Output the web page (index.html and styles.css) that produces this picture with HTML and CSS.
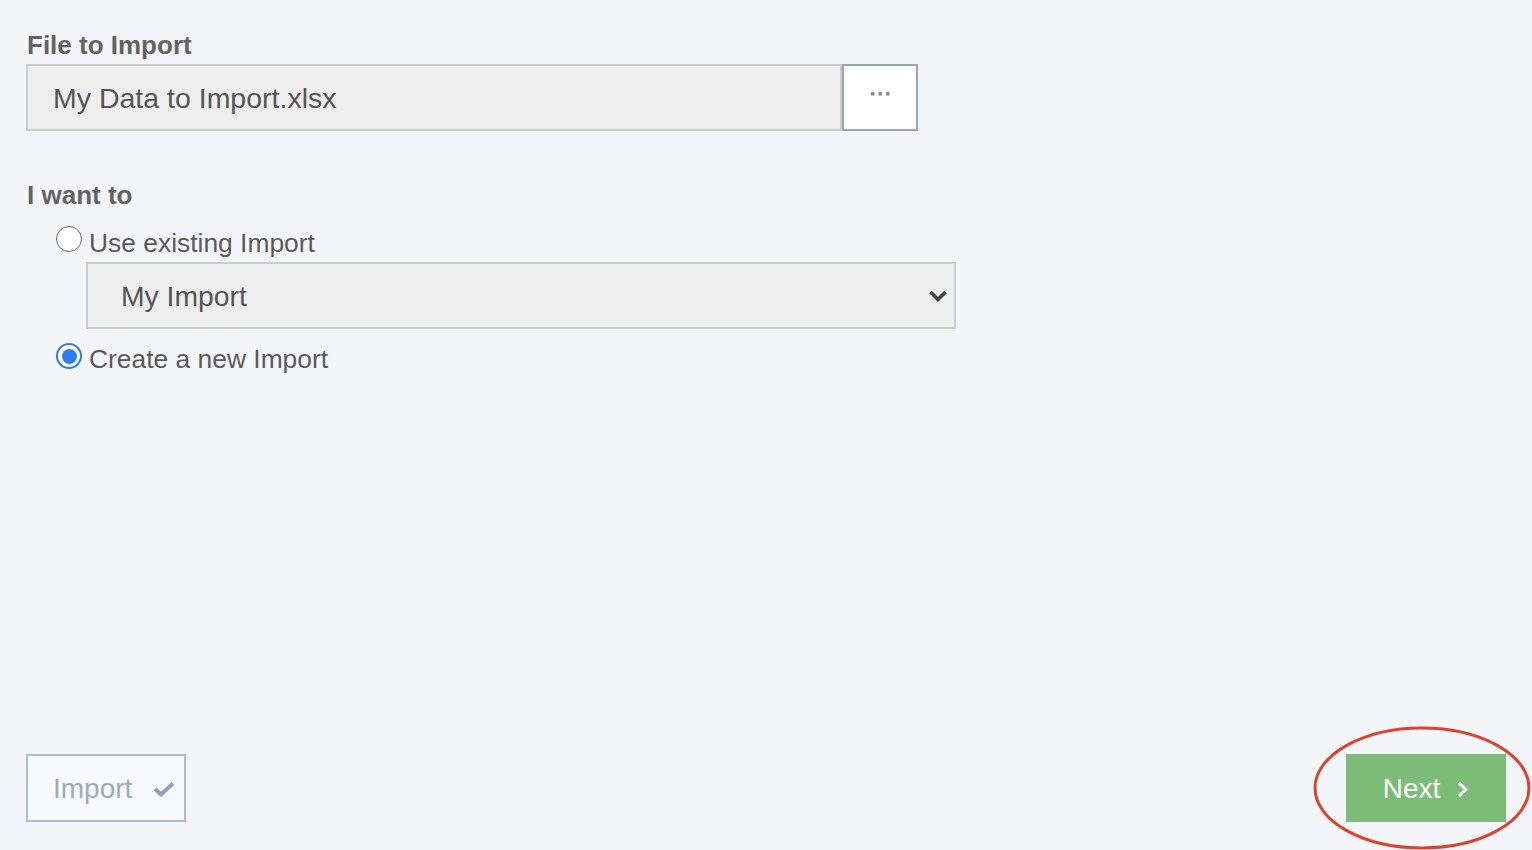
FILE: index.html
```html
<!DOCTYPE html>
<html lang="en">
<head>
<meta charset="utf-8">
<title>Import</title>
<link rel="stylesheet" href="styles.css">
</head>
<body>
<main class="page">
  <section class="form">
    <div class="field-label">File to Import</div>
    <div class="file-row">
      <div class="file-input">My Data to Import.xlsx</div>
      <button class="browse" type="button" aria-label="Browse">
        <svg width="19" height="4" viewBox="0 0 19 4"><rect x="0" y="0" width="3.5" height="3.5" fill="#7b8fa3"/><rect x="7.5" y="0" width="3.5" height="3.5" fill="#7b8fa3"/><rect x="15" y="0" width="3.5" height="3.5" fill="#7b8fa3"/></svg>
      </button>
    </div>

    <div class="field-label want">I want to</div>
    <div class="options">
      <div class="radio-row">
        <span class="radio"></span>
        <span class="radio-text">Use existing Import</span>
      </div>
      <div class="select">
        <span>My Import</span>
        <svg class="chev" width="20" height="14" viewBox="0 0 20 14"><path d="M2.5 3 L10 10.5 L17.5 3" fill="none" stroke="#444" stroke-width="3.6"/></svg>
      </div>
      <div class="radio-row second">
        <span class="radio checked"></span>
        <span class="radio-text">Create a new Import</span>
      </div>
    </div>
  </section>

  <footer class="actions">
    <button class="btn btn-import" type="button">
      <span>Import</span>
      <svg width="22" height="16" viewBox="0 0 22 16"><path d="M2 8 L8 13.5 L20 2.5" fill="none" stroke="#8fa3b8" stroke-width="4"/></svg>
    </button>
    <div class="next-wrap">
      <button class="btn btn-next" type="button">
        <span>Next</span>
        <svg width="12" height="17" viewBox="0 0 12 17"><path d="M2 1.8 L9 8.5 L2 15.2" fill="none" stroke="#fff" stroke-width="3"/></svg>
      </button>
      <svg class="highlight" width="218" height="124" viewBox="0 0 218 124"><ellipse cx="109" cy="62" rx="107" ry="60" fill="none" stroke="#d9432f" stroke-width="3"/></svg>
    </div>
  </footer>
</main>
</body>
</html>
```

FILE: styles.css
```css
html, body {
  margin: 0;
  padding: 0;
  background: #f4f5f9;
}

body {
  font-family: "Liberation Sans", Arial, Helvetica, sans-serif;
  color: #5a5a5a;
}

.page {
  box-sizing: border-box;
  height: 850px;
  display: flex;
  flex-direction: column;
  padding: 30px 26px 28px 26px;
  overflow: hidden;
}

.form {
  flex: 1;
}

.field-label {
  font-size: 26px;
  line-height: 30px;
  font-weight: bold;
  color: #636363;
  padding-left: 1px;
}

.file-row {
  display: flex;
  margin-top: 4px;
  width: 892px;
}

.file-input {
  box-sizing: border-box;
  width: 816px;
  height: 67px;
  border: 2px solid #cccccc;
  background: #eeeeee;
  display: flex;
  align-items: center;
  padding: 1px 0 0 25px;
  font-size: 28.5px;
  line-height: 32px;
  color: #555;
}

.browse {
  box-sizing: border-box;
  width: 76px;
  height: 67px;
  border: 2px solid #94a6b8;
  background: #ffffff;
  display: flex;
  align-items: center;
  justify-content: center;
  padding: 0 0 7px 1px;
  margin: 0;
}

.want {
  margin-top: 49px;
}

.options {
  margin-top: 16px;
  padding-left: 30px;
}

.radio-row {
  display: flex;
  align-items: flex-start;
  gap: 7px;
  height: 30px;
}

.radio-row.second {
  margin-top: 14px;
}

.radio {
  box-sizing: border-box;
  width: 26px;
  height: 26px;
  border-radius: 50%;
  border: 1.5px solid #666;
  background: #fff;
  position: relative;
  flex: none;
}

.radio.checked {
  border: 2.5px solid #2f7bf0;
}

.radio.checked::after {
  content: "";
  position: absolute;
  left: 50%;
  top: 50%;
  width: 15px;
  height: 15px;
  margin: -7.5px 0 0 -7.5px;
  border-radius: 50%;
  background: #2f7bf0;
}

.radio-text {
  font-size: 26.4px;
  line-height: 30px;
  margin-top: 2px;
  color: #5a5a5a;
}

.radio-row.second .radio-text {
  margin-top: 1px;
}

.select {
  box-sizing: border-box;
  margin: 6px 0 0 30px;
  width: 870px;
  height: 67px;
  border: 2px solid #cccccc;
  background: #eeeeee;
  display: flex;
  align-items: center;
  justify-content: space-between;
  padding: 1px 6px 0 33px;
  font-size: 28.3px;
  line-height: 32px;
  color: #555;
}

.actions {
  display: flex;
  justify-content: space-between;
  align-items: flex-end;
}

.btn {
  box-sizing: border-box;
  width: 160px;
  height: 68px;
  margin: 0;
  font-family: "Liberation Sans", Arial, Helvetica, sans-serif;
  font-size: 28px;
  line-height: 32px;
  display: flex;
  align-items: center;
}

.btn-import {
  border: 2px solid #adbdcc;
  background: #f9fafd;
  color: #9aabbd;
  padding: 1px 0 0 25px;
  gap: 21px;
}

.btn-import svg {
  margin-top: 1px;
}

.next-wrap {
  position: relative;
}

.btn-next {
  border: none;
  background: #7dbb78;
  color: #ffffff;
  justify-content: center;
  gap: 17px;
  padding: 1px 0 0 0;
}

.btn-next svg {
  margin-top: 1px;
}

.highlight {
  position: absolute;
  left: -33px;
  top: -28px;
  pointer-events: none;
}
```
